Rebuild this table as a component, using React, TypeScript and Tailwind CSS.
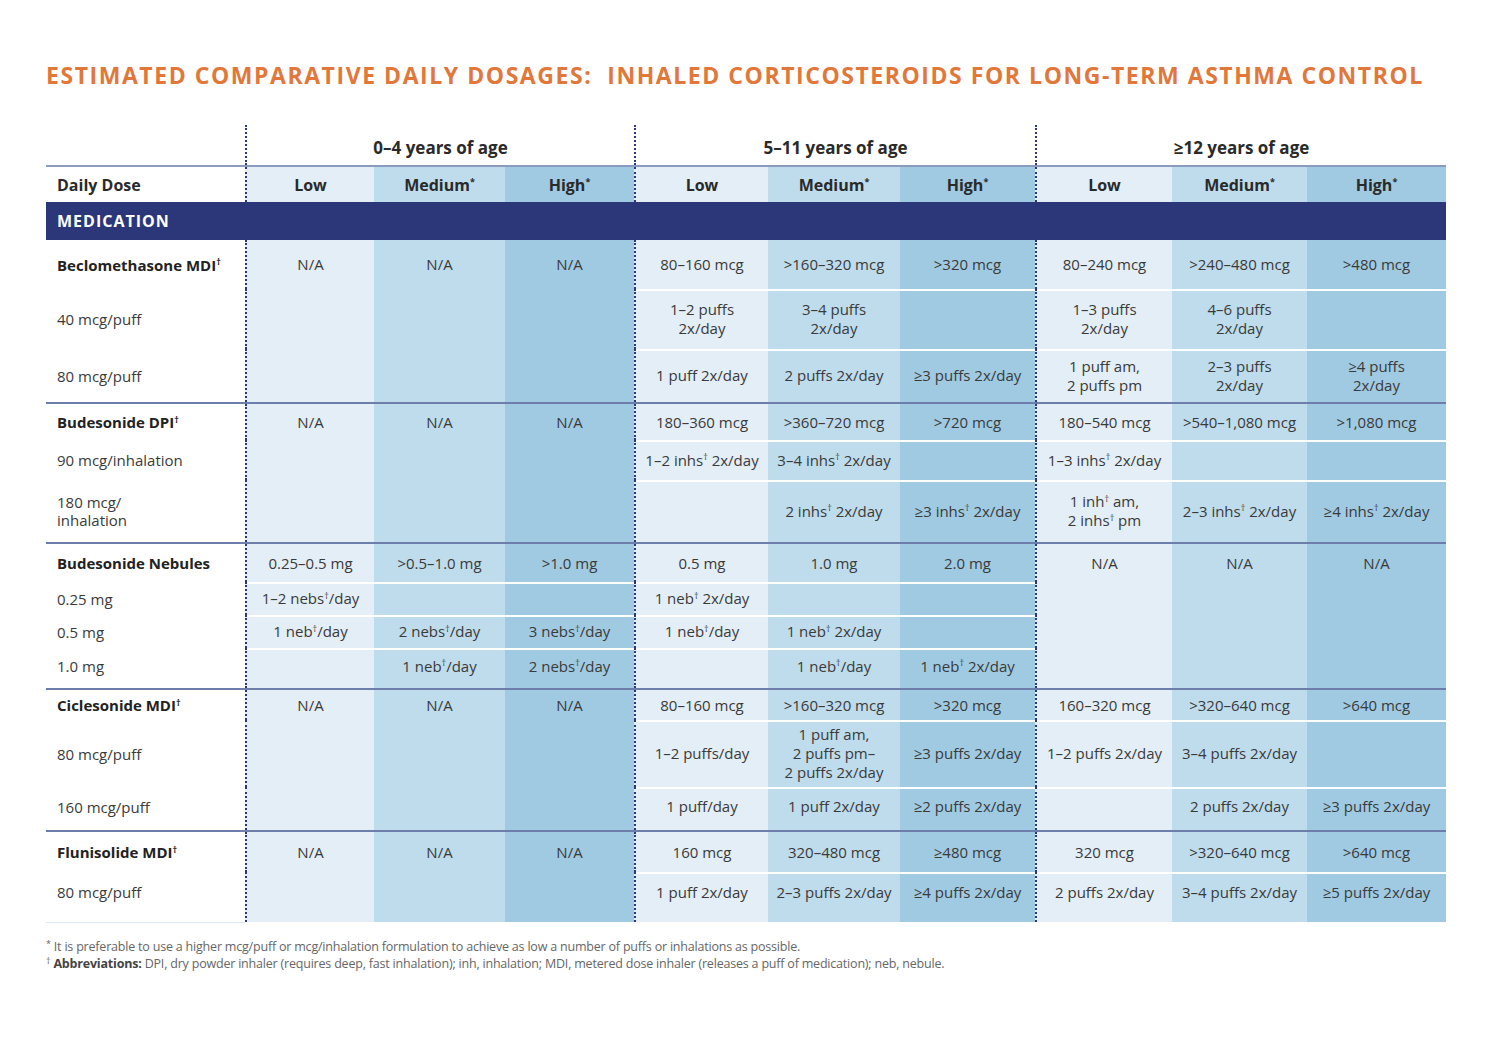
import React from 'react'

type Col = string[] | 'NA'

interface Group {
  labels: string[]
  rows: string
  cols: Col[]
  lastPad?: string
}

const GRID = 'grid grid-cols-[199px_129px_131px_129px_134px_132px_135px_137px_135px_139px]'

const colBg = [
  'bg-[#e3eef6]', 'bg-[#bedcec]', 'bg-[#9fcae2]',
  'bg-[#e3eef6]', 'bg-[#bedcec]', 'bg-[#9fcae2]',
  'bg-[#e3eef6]', 'bg-[#bedcec]', 'bg-[#9fcae2]',
]

// dotted rule at the start of each age group
const dotted = (c: number) =>
  c % 3 === 0 ? 'border-l-2 border-dotted border-l-[#2b3778]' : ''

const groups: Group[] = [
  {
    labels: ['Beclomethasone MDI†', '40 mcg/puff', '80 mcg/puff'],
    rows: 'grid-rows-[49px_60px_53px]',
    cols: [
      'NA', 'NA', 'NA',
      ['80–160 mcg', '1–2 puffs\n2x/day', '1 puff 2x/day'],
      ['>160–320 mcg', '3–4 puffs\n2x/day', '2 puffs 2x/day'],
      ['>320 mcg', '', '≥3 puffs 2x/day'],
      ['80–240 mcg', '1–3 puffs\n2x/day', '1 puff am,\n2 puffs pm'],
      ['>240–480 mcg', '4–6 puffs\n2x/day', '2–3 puffs\n2x/day'],
      ['>480 mcg', '', '≥4 puffs\n2x/day'],
    ],
  },
  {
    labels: ['Budesonide DPI†', '90 mcg/inhalation', '180 mcg/\ninhalation'],
    rows: 'grid-rows-[36px_40px_62px]',
    cols: [
      'NA', 'NA', 'NA',
      ['180–360 mcg', '1–2 inhs† 2x/day', ''],
      ['>360–720 mcg', '3–4 inhs† 2x/day', '2 inhs† 2x/day'],
      ['>720 mcg', '', '≥3 inhs† 2x/day'],
      ['180–540 mcg', '1–3 inhs† 2x/day', '1 inh† am,\n2 inhs† pm'],
      ['>540–1,080 mcg', '', '2–3 inhs† 2x/day'],
      ['>1,080 mcg', '', '≥4 inhs† 2x/day'],
    ],
  },
  {
    labels: ['Budesonide Nebules', '0.25 mg', '0.5 mg', '1.0 mg'],
    rows: 'grid-rows-[38px_33px_33px_40px]',
    lastPad: 'pb-[4px]',
    cols: [
      ['0.25–0.5 mg', '1–2 nebs†/day', '1 neb†/day', ''],
      ['>0.5–1.0 mg', '', '2 nebs†/day', '1 neb†/day'],
      ['>1.0 mg', '', '3 nebs†/day', '2 nebs†/day'],
      ['0.5 mg', '1 neb† 2x/day', '1 neb†/day', ''],
      ['1.0 mg', '', '1 neb† 2x/day', '1 neb†/day'],
      ['2.0 mg', '', '', '1 neb† 2x/day'],
      'NA', 'NA', 'NA',
    ],
  },
  {
    labels: ['Ciclesonide MDI†', '80 mcg/puff', '160 mcg/puff'],
    rows: 'grid-rows-[30px_67px_43px]',
    lastPad: 'pb-[4px]',
    cols: [
      'NA', 'NA', 'NA',
      ['80–160 mcg', '1–2 puffs/day', '1 puff/day'],
      ['>160–320 mcg', '1 puff am,\n2 puffs pm–\n2 puffs 2x/day', '1 puff 2x/day'],
      ['>320 mcg', '≥3 puffs 2x/day', '≥2 puffs 2x/day'],
      ['160–320 mcg', '1–2 puffs 2x/day', ''],
      ['>320–640 mcg', '3–4 puffs 2x/day', '2 puffs 2x/day'],
      ['>640 mcg', '', '≥3 puffs 2x/day'],
    ],
  },
  {
    labels: ['Flunisolide MDI†', '80 mcg/puff'],
    rows: 'grid-rows-[40px_50px]',
    lastPad: 'pb-[10px]',
    cols: [
      'NA', 'NA', 'NA',
      ['160 mcg', '1 puff 2x/day'],
      ['320–480 mcg', '2–3 puffs 2x/day'],
      ['≥480 mcg', '≥4 puffs 2x/day'],
      ['320 mcg', '2 puffs 2x/day'],
      ['>320–640 mcg', '3–4 puffs 2x/day'],
      ['>640 mcg', '≥5 puffs 2x/day'],
    ],
  },
]

// Splits a string into lines and lifts † and * marks to superscript
const Rich: React.FC<{ text: string }> = ({ text }) => (
  <>
    {text.split('\n').map((line, i) => (
      <div key={i}>
        {line.split(/([†*])/).map((part, j) =>
          part === '†' || part === '*' ? (
            <sup key={j} className="text-[9px] -top-[0.6em]">
              {part}
            </sup>
          ) : (
            <span key={j}>{part}</span>
          )
        )}
      </div>
    ))}
  </>
)

const MedGroup: React.FC<{ group: Group; first: boolean }> = ({ group, first }) => (
  <div className={`${GRID} ${group.rows} ${first ? '' : 'border-t-2 border-[#6d7eaa]'}`}>
    {group.labels.map((label, r) => {
      const pad = r === group.labels.length - 1 && group.lastPad ? group.lastPad : ''
      return (
        <React.Fragment key={r}>
          <div
            className={`flex items-center bg-white pl-[11px] text-[15px] leading-[18px] ${pad} ${
              r === 0 ? 'font-bold text-[#222]' : 'text-[#3a3a3a]'
            }`}
          >
            <div>
              <Rich text={label} />
            </div>
          </div>
          {group.cols.map((col, c) => {
            const merged = col === 'NA'
            const text = merged ? (r === 0 ? 'N/A' : '') : col[r]
            return (
              <div
                key={c}
                className={`flex items-center justify-center text-center text-[15px] leading-[19px] text-[#3a3a3a] ${pad} ${colBg[c]} ${dotted(c)} ${
                  r > 0 && !merged ? 'shadow-[inset_0_2px_0_#ffffff]' : ''
                }`}
              >
                <div>
                  <Rich text={text} />
                </div>
              </div>
            )
          })}
        </React.Fragment>
      )
    })}
  </div>
)

export default function App() {
  const levels = ['Low', 'Medium*', 'High*']
  return (
    <div className="min-h-screen bg-white font-['Open_Sans','Liberation_Sans',sans-serif] text-[#333]">
      <div className="pl-[46px] pt-[60px]">
        <h1 className="whitespace-nowrap text-[23px] font-bold uppercase leading-[30px] tracking-[1.55px] text-[#e2773a]">
          Estimated Comparative Daily Dosages:&nbsp; Inhaled Corticosteroids for Long-Term Asthma Control
        </h1>

        <div className="mt-[35px] w-[1400px]">
          {/* age groups */}
          <div className={`${GRID} h-[40px]`}>
            <div />
            {['0–4 years of age', '5–11 years of age', '≥12 years of age'].map((age) => (
              <div
                key={age}
                className="col-span-3 flex items-center justify-center border-l-2 border-dotted border-[#2b3778] pt-[6px] text-[17px] font-bold text-[#2a2a2a]"
              >
                {age}
              </div>
            ))}
          </div>

          {/* dose levels */}
          <div className={`${GRID} h-[37px] border-t-2 border-[#8b9bbf]`}>
            <div className="flex items-center bg-white pl-[11px] text-[16px] font-bold text-[#2a2a2a]">
              Daily Dose
            </div>
            {colBg.map((bg, c) => (
              <div
                key={c}
                className={`flex items-center justify-center text-[16px] font-bold text-[#2a2a2a] ${bg} ${dotted(c)}`}
              >
                <Rich text={levels[c % 3]} />
              </div>
            ))}
          </div>

          <div className="flex h-[38px] items-center bg-[#2b3778] pl-[11px] text-[16px] font-bold tracking-[1px] text-white">
            MEDICATION
          </div>

          {groups.map((g, i) => (
            <MedGroup key={i} group={g} first={i === 0} />
          ))}
          <div className="h-px w-[199px] bg-[#dbe6f0]" />
        </div>

        <div className="mt-[15px] text-[12.5px] leading-[17px] tracking-[-0.2px] text-[#666]">
          <p>
            <sup className="text-[9px]">*</sup> It is preferable to use a higher mcg/puff or mcg/inhalation
            formulation to achieve as low a number of puffs or inhalations as possible.
          </p>
          <p>
            <sup className="text-[9px]">†</sup> <span className="font-bold text-[#444]">Abbreviations:</span>{' '}
            DPI, dry powder inhaler (requires deep, fast inhalation); inh, inhalation; MDI, metered dose inhaler
            (releases a puff of medication); neb, nebule.
          </p>
        </div>
      </div>
    </div>
  )
}
